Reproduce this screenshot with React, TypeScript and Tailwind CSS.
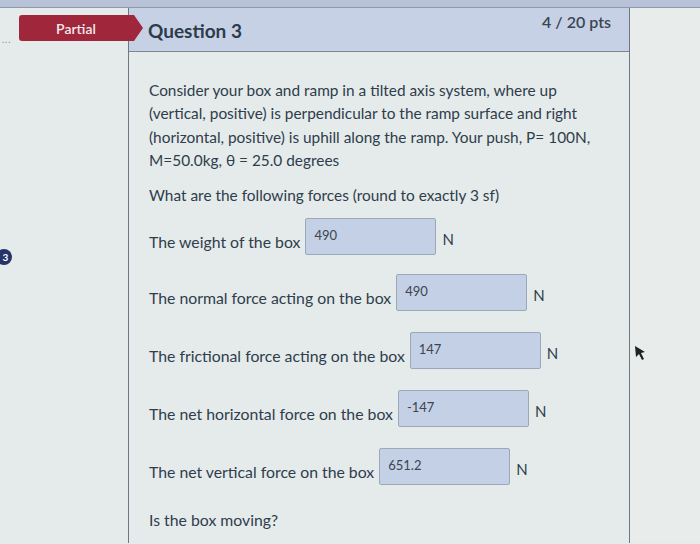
import React from "react";

type Row = { label: string; value: string; mt: string };

const rows: Row[] = [
  { label: "The weight of the box", value: "490", mt: "mt-[11px]" },
  { label: "The normal force acting on the box", value: "490", mt: "mt-[19px]" },
  { label: "The frictional force acting on the box", value: "147", mt: "mt-[21px]" },
  { label: "The net horizontal force on the box", value: "-147", mt: "mt-[21px]" },
  { label: "The net vertical force on the box", value: "651.2", mt: "mt-[21px]" },
];

function AnswerRow({ label, value, mt }: Row) {
  return (
    <div className={`flex items-center ${mt}`}>
      <div className="pt-[10px] text-[15.8px] leading-[23px]">{label}</div>
      <div className="ml-[5px] flex h-[37px] w-[131px] items-center rounded-[2px] border border-[#9ba8b8] bg-[#c4d0e5] pb-[3px] pl-[8px] text-[13px] text-[#3b4650]">
        {value}
      </div>
      <div className="ml-[6px] pt-[6px] text-[15px]">N</div>
    </div>
  );
}

export default function App() {
  return (
    <div className="relative h-[544px] w-[700px] overflow-hidden bg-[#e5ebea] font-[Lato,'Open_Sans',sans-serif] text-[#2f3d4c]">
      <div className="h-[8px] border-b border-[#8f99a9] bg-[#b8c3da]" />
      <div className="flex h-[535px]">
        <div className="flex w-[128px] flex-col">
          <div className="ml-[2px] mt-[27px] text-[9px] leading-[10px] tracking-[1px] text-[#7c8590]">...</div>
          <div className="ml-[-4px] mt-[204px] flex h-[16px] w-[16px] items-center justify-center rounded-full bg-[#27346b] pl-[3px] text-[10px] font-bold text-white">
            3
          </div>
        </div>
        <div className="flex w-[502px] flex-col border-l border-r border-[#6f7783]">
          <div className="flex h-[44px] items-start justify-between border-b border-[#7b8593] bg-[#c7d1e6] pl-[19px] pr-[18px]">
            <div className="pt-[11px] text-[19px] font-bold leading-[24px] text-[#2d3b4a]">Question 3</div>
            <div className="pt-[3px] text-[16px] font-semibold leading-[22px] text-[#3a4653]">4 / 20 pts</div>
          </div>
          <div className="flex flex-col pl-[20px] pt-[27px] text-[15.4px] leading-[23.3px]">
            <p>
              Consider your box and ramp in a tilted axis system, where up
              <br />
              (vertical, positive) is perpendicular to the ramp surface and right
              <br />
              (horizontal, positive) is uphill along the ramp. Your push, P= 100N,
              <br />
              M=50.0kg, θ = 25.0 degrees
            </p>
            <p className="mt-[12px]">What are the following forces (round to exactly 3 sf)</p>
            {rows.map((r, i) => (
              <AnswerRow key={i} {...r} />
            ))}
            <p className="mt-[23px] text-[15.8px]">Is the box moving?</p>
          </div>
        </div>
        <div className="flex-1 bg-[#e8eceb]" />
      </div>

      <div className="absolute left-[19px] top-[15px] flex h-[26px] w-[124px] items-center rounded-l-[3px] bg-[#a0273b] pr-[10px] [clip-path:polygon(0_0,calc(100%-9px)_0,100%_50%,calc(100%-9px)_100%,0_100%)]">
        <span className="w-full text-center text-[14px] font-semibold text-[#f3e9ec]">Partial</span>
      </div>

      <svg className="absolute left-[633px] top-[345px]" width="14" height="16" viewBox="0 0 14 16">
        <path d="M2 1 L12 7 L8 8 L11 14 L9 15 L6 9 L3 12 Z" fill="#1d2128" />
      </svg>
    </div>
  );
}
